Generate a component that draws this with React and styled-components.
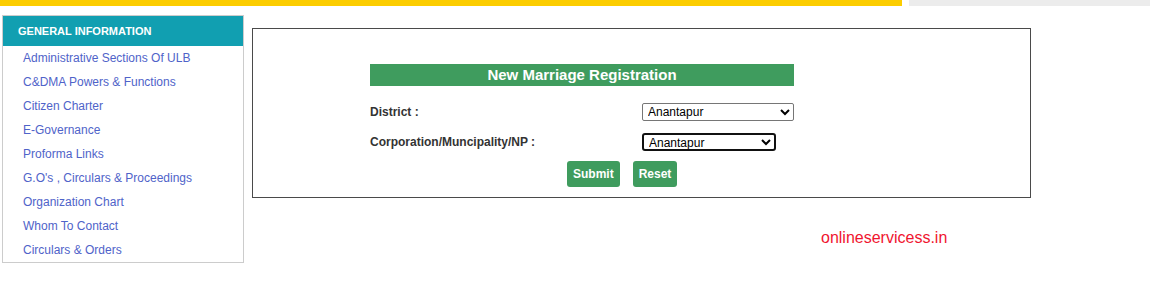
import React from 'react';
import styled, { createGlobalStyle } from 'styled-components';

const Global = createGlobalStyle`
  body {
    margin: 0;
    background: #fff;
    font-family: "Liberation Sans", Arial, sans-serif;
  }
`;

const TopStrip = styled.div`
  display: flex;
  gap: 7px;
  height: 6px;
`;

const Stripe = styled.div`
  width: ${p => p.w}px;
  background: ${p => p.bg};
`;

const Page = styled.div`
  display: flex;
  align-items: flex-start;
  padding: 9px 0 0 2px;
  gap: 8px;
`;

const Sidebar = styled.div`
  width: 240px;
  border: 1px solid #cccccc;
`;

const SideHead = styled.div`
  background: #119fb1;
  color: #fff;
  font-weight: bold;
  font-size: 11px;
  height: 30px;
  line-height: 30px;
  padding-left: 15px;
`;

const SideList = styled.ul`
  list-style: none;
  margin: 0;
  padding: 0 0 0 20px;
`;

const SideItem = styled.li`
  font-size: 12px;
  color: #4f63c9;
  height: 24px;
  line-height: 24px;
`;

const Main = styled.div`
  display: flex;
  flex-direction: column;
`;

const FormBox = styled.div`
  margin-top: 13px;
  width: 779px;
  height: 170px;
  border: 1px solid #4a4a4a;
  padding: 35px 0 0 117px;
  box-sizing: border-box;
`;

const FormTable = styled.div`
  width: 424px;
  display: grid;
  grid-template-columns: 272px 1fr;
  row-gap: 12px;
`;

const TitleBar = styled.div`
  grid-column: 1 / -1;
  background: #3f9c5e;
  color: #fff;
  font-weight: bold;
  font-size: 15px;
  height: 22px;
  line-height: 22px;
  text-align: center;
  margin-bottom: 4px;
`;

const Label = styled.div`
  font-size: 12px;
  font-weight: bold;
  color: #333;
  display: flex;
  align-items: center;
`;

const Select = styled.select`
  font-family: "Liberation Sans", Arial, sans-serif;
  font-size: 12px;
  width: ${p => p.w}px;
  height: 18px;
  border: ${p => (p.focused ? '2px solid #111' : '1px solid #767676')};
  border-radius: ${p => (p.focused ? '3px' : '2px')};
  padding: 0 1px;
  background: #fff;
  color: #000;
  outline: none;
`;

const Buttons = styled.div`
  grid-column: 1 / -1;
  display: flex;
  gap: 13px;
  padding-left: 197px;
  margin-top: -2px;
`;

const Button = styled.button`
  background: #3f9c5e;
  color: #fff;
  border: none;
  border-radius: 3px;
  font-family: "Liberation Sans", Arial, sans-serif;
  font-weight: bold;
  font-size: 12px;
  height: 26px;
  padding: 0 6px;
`;

const Watermark = styled.div`
  margin: 31px 0 0 569px;
  color: #f0142f;
  font-size: 16px;
`;

const links = [
  'Administrative Sections Of ULB',
  'C&DMA Powers & Functions',
  'Citizen Charter',
  'E-Governance',
  'Proforma Links',
  "G.O's , Circulars & Proceedings",
  'Organization Chart',
  'Whom To Contact',
  'Circulars & Orders',
];

export default function App() {
  return (
    <>
      <Global />
      <TopStrip>
        <Stripe w={902} bg="#fccd00" />
        <Stripe w={241} bg="#ececec" />
      </TopStrip>
      <Page>
        <Sidebar>
          <SideHead>GENERAL INFORMATION</SideHead>
          <SideList>
            {links.map(l => (
              <SideItem key={l}>{l}</SideItem>
            ))}
          </SideList>
        </Sidebar>
        <Main>
          <FormBox>
            <FormTable>
              <TitleBar>New Marriage Registration</TitleBar>
              <Label>District :</Label>
              <div>
                <Select w={152} defaultValue="Anantapur">
                  <option>Anantapur</option>
                </Select>
              </div>
              <Label>Corporation/Muncipality/NP :</Label>
              <div>
                <Select w={134} focused defaultValue="Anantapur">
                  <option>Anantapur</option>
                </Select>
              </div>
              <Buttons>
                <Button>Submit</Button>
                <Button>Reset</Button>
              </Buttons>
            </FormTable>
          </FormBox>
          <Watermark>onlineservicess.in</Watermark>
        </Main>
      </Page>
    </>
  );
}
